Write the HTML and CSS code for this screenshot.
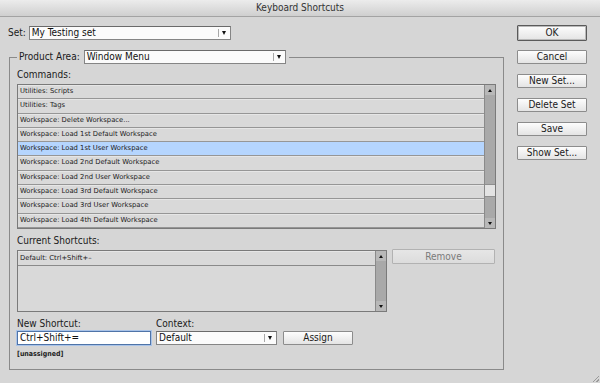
FILE: index.html
```html
<!DOCTYPE html>
<html lang="en">
<head>
<meta charset="utf-8">
<title>Keyboard Shortcuts</title>
<link rel="stylesheet" href="styles.css">
</head>
<body>
<div class="window">
  <div class="titlebar">Keyboard Shortcuts</div>
  <div class="content">
    <div class="main">
      <div class="set-row">
        <span class="label">Set:</span>
        <div class="select set-select"><span class="sel-text">My Testing set</span><span class="sel-sep"></span><span class="sel-arrow"></span></div>
      </div>
      <fieldset class="group">
        <legend class="group-legend">
          <span class="label">Product Area:</span>
          <div class="select area-select"><span class="sel-text">Window Menu</span><span class="sel-sep"></span><span class="sel-arrow"></span></div>
        </legend>
        <div class="label block commands-label">Commands:</div>
        <div class="list cmd-list">
          <div class="rows">
            <div class="row">Utilities: Scripts</div>
            <div class="row">Utilities: Tags</div>
            <div class="row">Workspace: Delete Workspace...</div>
            <div class="row">Workspace: Load 1st Default Workspace</div>
            <div class="row selected">Workspace: Load 1st User Workspace</div>
            <div class="row">Workspace: Load 2nd Default Workspace</div>
            <div class="row">Workspace: Load 2nd User Workspace</div>
            <div class="row">Workspace: Load 3rd Default Workspace</div>
            <div class="row">Workspace: Load 3rd User Workspace</div>
            <div class="row">Workspace: Load 4th Default Workspace</div>
          </div>
          <div class="scrollbar">
            <span class="sb-btn"><span class="tri-up"></span></span>
            <span class="sb-track" style="height: 89px"></span>
            <span class="sb-thumb"></span>
            <span class="sb-track grow"></span>
            <span class="sb-btn"><span class="tri-down"></span></span>
          </div>
        </div>
        <div class="label block current-label">Current Shortcuts:</div>
        <div class="current-row">
          <div class="list cur-list">
            <div class="rows">
              <div class="row cur">Default: Ctrl+Shift+–</div>
            </div>
            <div class="scrollbar">
              <span class="sb-btn"><span class="tri-up"></span></span>
              <span class="sb-track grow"></span>
              <span class="sb-btn"><span class="tri-down"></span></span>
            </div>
          </div>
          <button class="btn disabled remove-btn">Remove</button>
        </div>
        <div class="new-grid">
          <div class="label">New Shortcut:</div>
          <div class="label">Context:</div>
          <div></div>
          <div class="text-input">Ctrl+Shift+=</div>
          <div class="select ctx-select"><span class="sel-text">Default</span><span class="sel-sep"></span><span class="sel-arrow"></span></div>
          <button class="btn assign-btn">Assign</button>
        </div>
        <div class="unassigned">[unassigned]</div>
      </fieldset>
    </div>
    <div class="side">
      <button class="btn default">OK</button>
      <button class="btn">Cancel</button>
      <button class="btn">New Set...</button>
      <button class="btn">Delete Set</button>
      <button class="btn">Save</button>
      <button class="btn">Show Set...</button>
    </div>
  </div>
  <div class="grip"></div>
</div>
</body>
</html>
```

FILE: styles.css
```css
html, body {
  margin: 0;
  padding: 0;
}
body {
  width: 600px;
  height: 383px;
  overflow: hidden;
  background: #d6d6d6;
  font-family: "DejaVu Sans", "Liberation Sans", sans-serif;
  font-stretch: condensed;
  color: #111;
}
.window {
  position: relative;
  width: 600px;
  height: 383px;
  background: #d6d6d6;
}
.titlebar {
  height: 16px;
  line-height: 16px;
  text-align: center;
  font-size: 10px;
  color: #333;
  background: linear-gradient(#ececec, #cfcfcf);
  border-bottom: 1px solid #a3a3a3;
}
.content {
  display: flex;
  padding-top: 9px;
}
.main {
  width: 504px;
}
.label {
  font-size: 10px;
  line-height: 12px;
  color: #1a1a1a;
  white-space: nowrap;
}
.block {
  display: block;
}
.set-row {
  display: flex;
  align-items: center;
  gap: 3px;
  padding-left: 8px;
  height: 14px;
}
.select {
  position: relative;
  display: flex;
  align-items: center;
  height: 14px;
  box-sizing: border-box;
  background: #fbfbfb;
  border: 1px solid #858585;
  border-top-color: #6a6a6a;
  font-size: 10px;
}
.sel-text {
  flex: 1;
  padding-left: 2px;
  line-height: 12px;
  white-space: nowrap;
  overflow: hidden;
}
.sel-sep {
  width: 1px;
  height: 8px;
  background: #a8a8a8;
  margin-right: 3px;
}
.sel-arrow {
  width: 0;
  height: 0;
  border-left: 2.5px solid transparent;
  border-right: 2.5px solid transparent;
  border-top: 4px solid #111;
  margin-right: 4px;
}
.set-select {
  width: 202px;
}
.group {
  margin: 10px 0 0 9px;
  width: 495px;
  box-sizing: border-box;
  border: 1px solid #8a8a8a;
  padding: 0 7px 10px 7px;
  min-width: 0;
}
.group-legend {
  display: flex;
  align-items: center;
  gap: 4px;
  padding: 0 3px 0 2px;
  height: 14px;
}
.area-select {
  width: 202px;
}
.commands-label {
  margin-top: 5px;
  margin-bottom: 3px;
}
.list {
  display: flex;
  box-sizing: border-box;
  border: 1px solid #7a7a7a;
  background: #d9d9d9;
}
.cmd-list {
  width: 479px;
  height: 145px;
}
.rows {
  flex: 1;
  min-width: 0;
}
.row {
  height: 14.3px;
  line-height: 13.3px;
  box-sizing: border-box;
  border-bottom: 1px solid #969696;
  box-shadow: inset 0 1px 0 #e6e6e6;
  font-size: 6.8px;
  padding-left: 2px;
  color: #222;
  white-space: nowrap;
  font-stretch: normal;
}
.row.selected {
  background: #b5d5fe;
  box-shadow: none;
}
.row.cur {
  height: 15px;
  line-height: 14px;
  border-bottom-color: #8a8a8a;
}
.scrollbar {
  width: 10px;
  display: flex;
  flex-direction: column;
  background: #a9a9a9;
  border-left: 1px solid #8a8a8a;
}
.sb-btn {
  height: 10px;
  display: flex;
  align-items: center;
  justify-content: center;
  background: #b8b8b8;
  flex: none;
}
.sb-track {
  display: block;
  flex: none;
  background: #a9a9a9;
}
.sb-track.grow {
  flex: 1;
}
.sb-thumb {
  display: block;
  height: 13px;
  flex: none;
  background: #e3e3e3;
  border-top: 1px solid #8e8e8e;
  border-bottom: 1px solid #8e8e8e;
  box-sizing: border-box;
}
.tri-up {
  width: 0;
  height: 0;
  border-left: 2px solid transparent;
  border-right: 2px solid transparent;
  border-bottom: 3px solid #111;
}
.tri-down {
  width: 0;
  height: 0;
  border-left: 2px solid transparent;
  border-right: 2px solid transparent;
  border-top: 3px solid #111;
}
.current-label {
  margin-top: 6px;
  margin-bottom: 3px;
}
.current-row {
  display: flex;
  align-items: flex-start;
  gap: 5px;
}
.cur-list {
  width: 370px;
  height: 62px;
}
.btn {
  display: block;
  box-sizing: border-box;
  width: 70px;
  height: 15px;
  padding: 0;
  margin: 0;
  border: 1px solid #8c8c8c;
  border-radius: 1px;
  background: linear-gradient(#fdfdfd, #e4e4e4);
  font-family: inherit;
  font-stretch: condensed;
  font-size: 10px;
  line-height: 13px;
  color: #1a1a1a;
  text-align: center;
}
.btn.default {
  height: 16px;
  border: 1px solid #5a5a5a;
  box-shadow: inset 0 0 0 1px #b9b9b9;
}
.btn.disabled {
  color: #7a7a7a;
  background: linear-gradient(#e6e6e6, #dcdcdc);
  border-color: #b2b2b2;
}
.remove-btn {
  width: 103px;
  margin-top: -1px;
}
.new-grid {
  display: grid;
  grid-template-columns: 134px 122px 70px;
  column-gap: 5px;
  margin-top: 6px;
  align-items: center;
}
.new-grid .label {
  margin-bottom: 1px;
}
.text-input {
  height: 14px;
  box-sizing: border-box;
  background: #fff;
  border: 1px solid #4f74a8;
  box-shadow: 0 0 0 1px #a9c3e8;
  font-size: 10px;
  line-height: 12px;
  padding-left: 2px;
  color: #111;
}
.ctx-select {
  width: 121px;
}
.assign-btn {
  height: 14px;
  line-height: 12px;
}
.unassigned {
  margin-top: 4px;
  font-size: 7px;
  font-weight: bold;
  line-height: 10px;
  color: #222;
}
.side {
  margin-left: 13px;
  display: flex;
  flex-direction: column;
  gap: 10px;
}
.side .btn {
  height: 14px;
  line-height: 12px;
}
.side .btn.default {
  height: 16px;
  line-height: 14px;
  margin-top: -1px;
  margin-bottom: -1px;
}
.grip {
  position: absolute;
  right: 1px;
  bottom: 1px;
  width: 6px;
  height: 6px;
  background: linear-gradient(135deg, transparent 45%, #9a9a9a 45%, #9a9a9a 55%, transparent 55%, transparent 75%, #9a9a9a 75%, #9a9a9a 85%, transparent 85%);
}
```
